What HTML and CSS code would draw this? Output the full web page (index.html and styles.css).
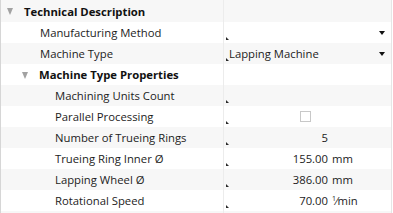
FILE: index.html
```html
<!DOCTYPE html>
<html>
<head>
<meta charset="utf-8">
<link rel="stylesheet" href="styles.css">
</head>
<body>
<div class="grid">
  <div class="row alt">
    <div class="name lvl0"><span class="exp"></span><span class="cat">Technical Description</span></div>
    <div class="value"></div>
  </div>
  <div class="row">
    <div class="name lvl1">Manufacturing Method</div>
    <div class="value"><span class="mark"></span><span class="text"></span><span class="drop"></span></div>
  </div>
  <div class="row alt">
    <div class="name lvl1">Machine Type</div>
    <div class="value"><span class="mark"></span><span class="text">Lapping Machine</span><span class="drop"></span></div>
  </div>
  <div class="row">
    <div class="name lvl1 sub"><span class="exp"></span><span class="cat">Machine Type Properties</span></div>
    <div class="value"></div>
  </div>
  <div class="row alt">
    <div class="name lvl2">Machining Units Count</div>
    <div class="value"><span class="mark"></span></div>
  </div>
  <div class="row">
    <div class="name lvl2">Parallel Processing</div>
    <div class="value"><span class="mark"></span><span class="check"></span></div>
  </div>
  <div class="row alt">
    <div class="name lvl2">Number of Trueing Rings</div>
    <div class="value"><span class="mark"></span><span class="num">5</span></div>
  </div>
  <div class="row">
    <div class="name lvl2">Trueing Ring Inner Ø</div>
    <div class="value"><span class="mark"></span><span class="num">155.00</span><span class="unit">mm</span></div>
  </div>
  <div class="row alt">
    <div class="name lvl2">Lapping Wheel Ø</div>
    <div class="value"><span class="mark"></span><span class="num">386.00</span><span class="unit">mm</span></div>
  </div>
  <div class="row">
    <div class="name lvl2">Rotational Speed</div>
    <div class="value"><span class="mark"></span><span class="num">70.00</span><span class="unit"><sup class="sup">1</sup>⁄min</span></div>
  </div>
  <div class="row alt tail">
    <div class="name lvl2"></div>
    <div class="value"></div>
  </div>
</div>
</body>
</html>
```
FILE: styles.css
```css
* {
  box-sizing: border-box;
}
html, body {
  margin: 0;
  padding: 0;
  background: #ffffff;
}
body {
  font-family: "Open Sans", "Noto Sans", sans-serif;
  font-size: 11.3px;
  color: #1c1c1c;
  overflow: hidden;
}
.grid {
  width: 392px;
  border-left: 1px solid #d6d6d6;
  border-right: 1px solid #e6e6e6;
}
.row {
  display: flex;
  height: 21px;
  background: #ffffff;
}
.row:first-child {
  height: 22px;
}
.row.alt {
  background: #f7f7f7;
}
.row.tail {
  height: 2px;
}
.name {
  width: 222px;
  flex: none;
  display: flex;
  align-items: center;
  white-space: nowrap;
}
.lvl0 { padding-left: 6px; }
.lvl1 { padding-left: 39px; }
.lvl1.sub { padding-left: 21px; }
.lvl2 { padding-left: 54px; }
.exp {
  width: 0;
  height: 0;
  border-left: 3.5px solid transparent;
  border-right: 3.5px solid transparent;
  border-top: 7px solid #a2a2a2;
  margin-right: 11px;
  margin-top: 1px;
}
.cat {
  font-weight: 700;
  color: #111;
}
.value {
  flex: 1;
  position: relative;
  border-left: 1px solid #ececec;
  display: flex;
  align-items: center;
  white-space: nowrap;
}
.mark {
  position: absolute;
  left: 2px;
  bottom: 3px;
  width: 0;
  height: 0;
  border-left: 3px solid #2a2a2a;
  border-top: 3px solid transparent;
}
.text {
  flex: 1;
  padding-left: 5px;
  color: #1c1c1c;
}
.drop {
  width: 0;
  height: 0;
  border-left: 3.5px solid transparent;
  border-right: 3.5px solid transparent;
  border-top: 4px solid #111;
  margin-right: 6px;
  margin-top: 1px;
}
.check {
  width: 11px;
  height: 11px;
  border: 1px solid #c8c8c8;
  background: #fff;
  margin-left: 76px;
  margin-top: -1px;
}
.num {
  width: 104px;
  text-align: right;
  flex: none;
}
.unit {
  padding-left: 4px;
}
.sup {
  font-size: 7px;
  vertical-align: 4px;
  line-height: 0;
}
```
